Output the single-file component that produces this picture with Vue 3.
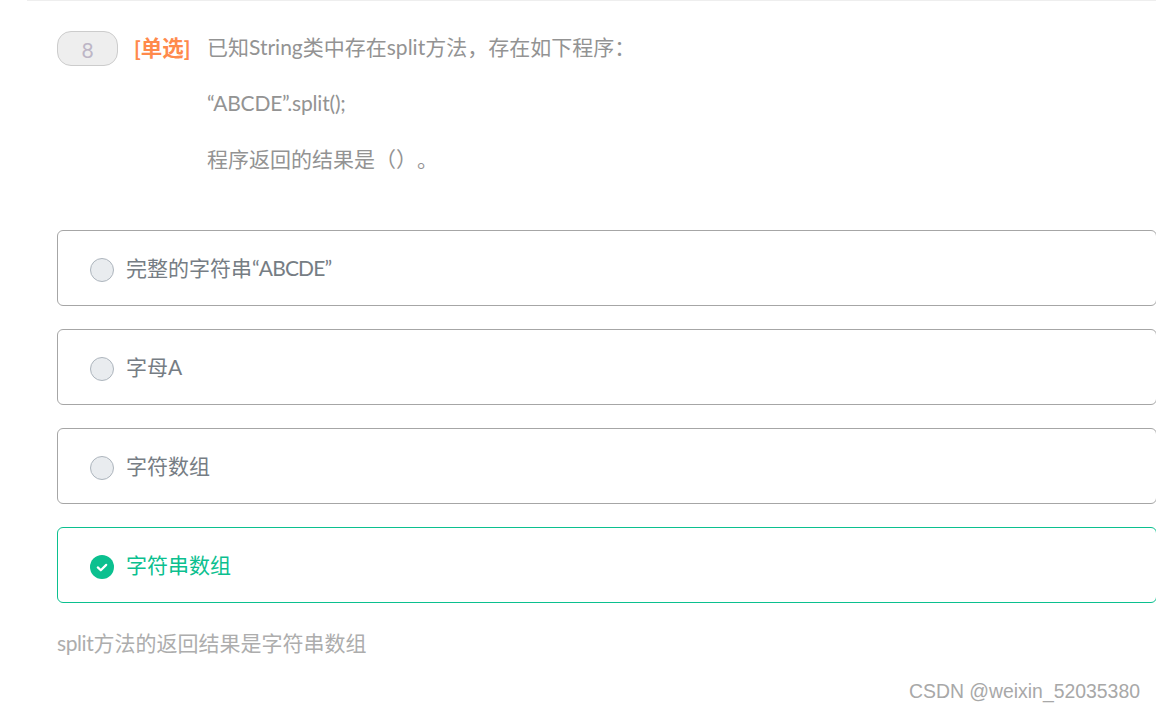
<template>
  <div class="page">
    <div class="question">
      <div class="head">
        <span class="num">8</span>
        <span class="tag">[单选]</span>
        <div class="stem">
          <p>已知String类中存在split方法，存在如下程序：</p>
          <p class="code">“ABCDE”.split();</p>
          <p>程序返回的结果是（）。</p>
        </div>
      </div>
      <div class="options">
        <div
          v-for="opt in options"
          :key="opt.text"
          class="option"
          :class="{ checked: opt.checked }"
        >
          <span class="radio">
            <svg v-if="opt.checked" viewBox="0 0 24 24" width="24" height="24">
              <path d="M7.8 12.4l3 2.9 5.4-5.4" fill="none" stroke="#fff" stroke-width="2.2" stroke-linecap="round" stroke-linejoin="round" />
            </svg>
          </span>
          <span class="label">{{ opt.text }}<span v-if="opt.latin" class="latin">{{ opt.latin }}</span></span>
        </div>
      </div>
      <p class="analysis"><span class="latin-sm">split</span>方法的返回结果是字符串数组</p>
    </div>
    <div class="watermark">CSDN @weixin_52035380</div>
  </div>
</template>

<script setup>
const options = [
  { text: '完整的字符串', latin: '“ABCDE”', checked: false },
  { text: '字母A', checked: false },
  { text: '字符数组', checked: false },
  { text: '字符串数组', checked: true }
]
</script>

<style>
html, body {
  margin: 0;
  background: #fff;
  overflow: hidden;
}
</style>

<style scoped>
.page {
  position: relative;
  width: 1156px;
  height: 710px;
  overflow: hidden;
  font-family: Lato, "Noto Sans CJK SC", sans-serif;
  text-spacing-trim: space-all;
  background: #fff;
}

.question {
  margin-left: 27px;
  padding: 30px 0 0 30px;
  border-top: 1px solid #eeeeee;
  width: 1130px;
  box-sizing: border-box;
}

.head {
  display: flex;
  align-items: flex-start;
}

.num {
  flex: none;
  box-sizing: border-box;
  width: 61px;
  height: 35px;
  line-height: 35px;
  margin-right: 16px;
  text-align: center;
  font-size: 21px;
  color: #bdb6c6;
  background: #eeeeee;
  border: 1px solid #cccccc;
  border-radius: 14px;
}

.tag {
  flex: none;
  width: 73px;
  line-height: 35px;
  font-size: 21.5px;
  font-weight: 700;
  color: #ff8a4c;
}

.stem p {
  margin: 0 0 28px;
  font-size: 21px;
  line-height: 28px;
  color: #939393;
  white-space: nowrap;
}

.stem p:first-child {
  margin-top: 2px;
}

.stem .code {
  letter-spacing: -0.2px;
}

.options {
  margin-top: 29px;
  display: flex;
  flex-direction: column;
  gap: 23px;
}

.option {
  box-sizing: border-box;
  width: 1100px;
  height: 76px;
  padding-left: 32px;
  display: flex;
  align-items: center;
  gap: 12px;
  border: 1px solid #a6a6a6;
  border-radius: 6px;
  color: #767d84;
}

.radio {
  flex: none;
  box-sizing: border-box;
  width: 24px;
  height: 24px;
  margin-top: 3px;
  border-radius: 50%;
  background: #e9ecef;
  border: 1px solid #adb5bd;
}

.radio svg {
  display: block;
}

.label {
  font-size: 21px;
  line-height: 28px;
}

.latin {
  letter-spacing: -0.85px;
}

.latin-sm {
  letter-spacing: -0.4px;
}

.option.checked {
  border-color: #0bc08f;
  color: #0bc08f;
}

.option.checked .radio {
  background: #0bc08f;
  border: none;
}

.analysis {
  margin: 26px 0 0;
  font-size: 21px;
  line-height: 28px;
  color: #adadad;
}

.watermark {
  position: absolute;
  left: 909px;
  top: 679px;
  font-family: "Liberation Sans", sans-serif;
  font-size: 19.4px;
  line-height: 24px;
  color: #a8a8a8;
  white-space: nowrap;
}
</style>
